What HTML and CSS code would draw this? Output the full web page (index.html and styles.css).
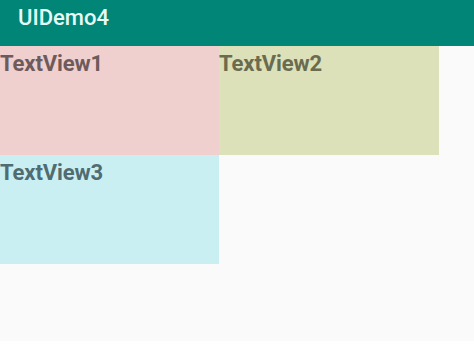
FILE: index.html
```html
<!DOCTYPE html>
<html lang="en">

<head>
    <meta charset="UTF-8">
    <meta name="viewport" content="width=device-width, initial-scale=1.0">
    <title>UIDemo4</title>
    <link rel="stylesheet" href="styles.css">
</head>

<body>
    <div id="screen">
        <div id="toolbar">UIDemo4</div>
        <div id="grid">
            <div class="cell pink">TextView1</div>
            <div class="cell green">TextView2</div>
            <div class="cell cyan">TextView3</div>
        </div>
    </div>
    <div id="bottom"></div>
</body>

</html>
```

FILE: styles.css
```css
* {
    padding: 0;
    margin: 0;
}

body {
    background-color: #fff;
    font-family: Roboto, "Liberation Sans", sans-serif;
}

#screen {
    height: 341px;
    background-color: #fafafa;
}

/* 底部白边 */
#bottom {
    height: 15px;
}

#toolbar {
    height: 46px;
    padding-left: 18px;
    line-height: 36px;
    font-size: 22px;
    font-weight: 500;
    color: #e6fbf5;
    background-color: #008577;
}

#grid {
    display: grid;
    grid-template-columns: 219px 220px;
    grid-auto-rows: 109px;
}

.cell {
    font-size: 22px;
    font-weight: bold;
    line-height: 36px;
    letter-spacing: -0.1px;
}

.pink {
    background-color: #f0cfcf;
    color: #6d5b5b;
}

.green {
    background-color: #dde1b9;
    color: #6a6b4f;
}

.cyan {
    background-color: #c9eff3;
    color: #506c71;
}
```
